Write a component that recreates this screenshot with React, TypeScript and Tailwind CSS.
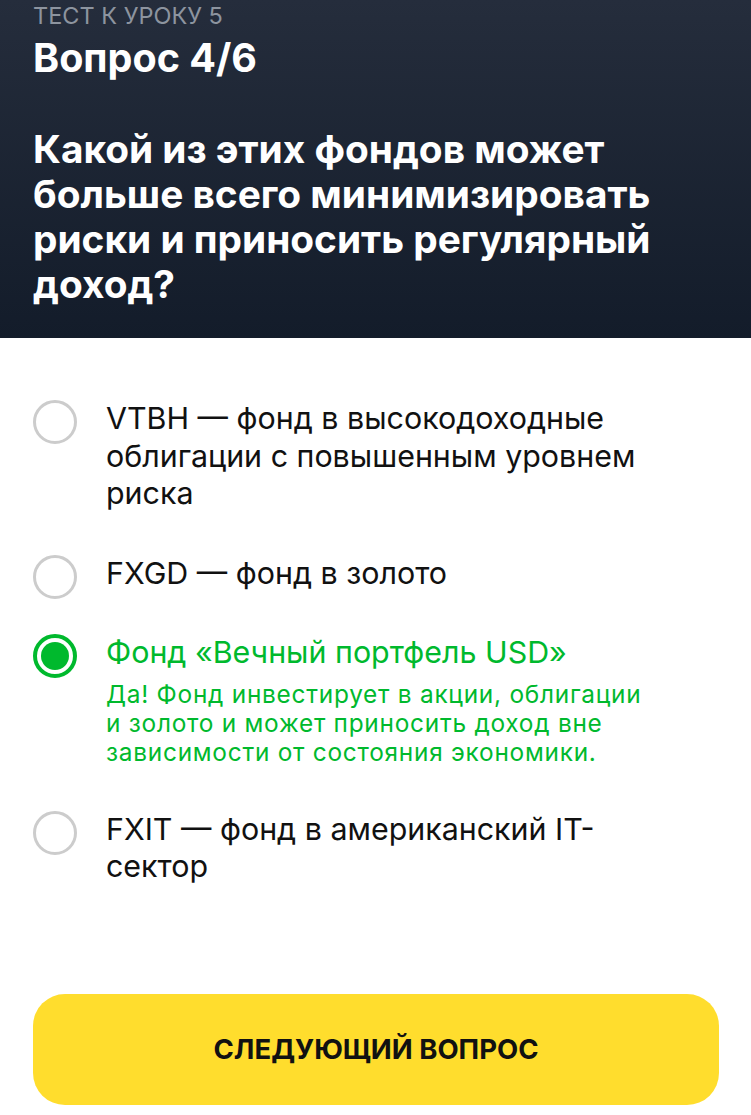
import React from "react";

type Option = {
  id: string;
  label: string;
  note?: string;
};

const OPTIONS: Option[] = [
  { id: "vtbh", label: "VTBH — фонд в высокодоходные облигации с повышенным уровнем риска" },
  { id: "fxgd", label: "FXGD — фонд в золото" },
  {
    id: "usd",
    label: "Фонд «Вечный портфель USD»",
    note: "Да! Фонд инвестирует в акции, облигации и золото и может приносить доход вне зависимости от состояния экономики.",
  },
  { id: "fxit", label: "FXIT — фонд в американский IT-сектор" },
];

const SELECTED = "usd";

function Radio({ checked }: { checked: boolean }) {
  // wrapper is one text line tall so the 44px circle doesn't stretch single-line rows
  return (
    <div className="h-[37.5px] w-[44px] shrink-0">
      {checked ? (
        <span className="flex h-[44px] w-[44px] items-center justify-center rounded-full border-[4px] border-[#00b92d]">
          <span className="h-[28px] w-[28px] rounded-full bg-[#00b92d]" />
        </span>
      ) : (
        <span className="block h-[44px] w-[44px] rounded-full border-[3px] border-[#cccccc]" />
      )}
    </div>
  );
}

export default function App() {
  return (
    <div className="flex min-h-[1115px] w-full flex-col bg-white font-['Inter',sans-serif]">
      {/* ── Header ─────────────────────────────────────────── */}
      <div className="bg-gradient-to-b from-[#252d3c] to-[#131c2a] px-[33px] pb-[32px]">
        <div className="text-[23.5px] leading-[32px] text-[#8d949f]">ТЕСТ К УРОКУ 5</div>
        <div className="mt-[4px] text-[39.5px] font-bold leading-[44px] text-white">Вопрос 4/6</div>
        <h1 className="mt-[46px] text-[38.8px] font-bold leading-[45px] text-white">
          Какой из этих фондов может больше всего минимизировать риски и приносить регулярный доход?
        </h1>
      </div>

      {/* ── Answers ────────────────────────────────────────── */}
      <ul className="flex flex-col gap-[42px] px-[33px] pt-[62px]">
        {OPTIONS.map((o) => {
          const checked = o.id === SELECTED;
          return (
            <li key={o.id} className={`flex items-start gap-[29px] ${o.note ? "pb-[2px]" : ""}`}>
              <Radio checked={checked} />
              <div className="flex-1 pr-[38px]">
                <div
                  className={`text-[30.4px] leading-[37.5px] ${checked ? "text-[#00b92d]" : "text-[#111111]"}`}
                >
                  {o.label}
                </div>
                {o.note && (
                  <div className="mt-[8px] pr-[20px] text-[24.4px] leading-[29px] tracking-[0.75px] text-[#00b92d]">
                    {o.note}
                  </div>
                )}
              </div>
            </li>
          );
        })}
      </ul>

      {/* ── Next button ────────────────────────────────────── */}
      <div className="mt-auto px-[32px] pb-[10px] pl-[33px]">
        <button className="flex h-[111px] w-full items-center justify-center rounded-[32px] bg-[#ffdd2d] text-[27.5px] font-bold uppercase text-[#111111]">
          Следующий вопрос
        </button>
      </div>
    </div>
  );
}
